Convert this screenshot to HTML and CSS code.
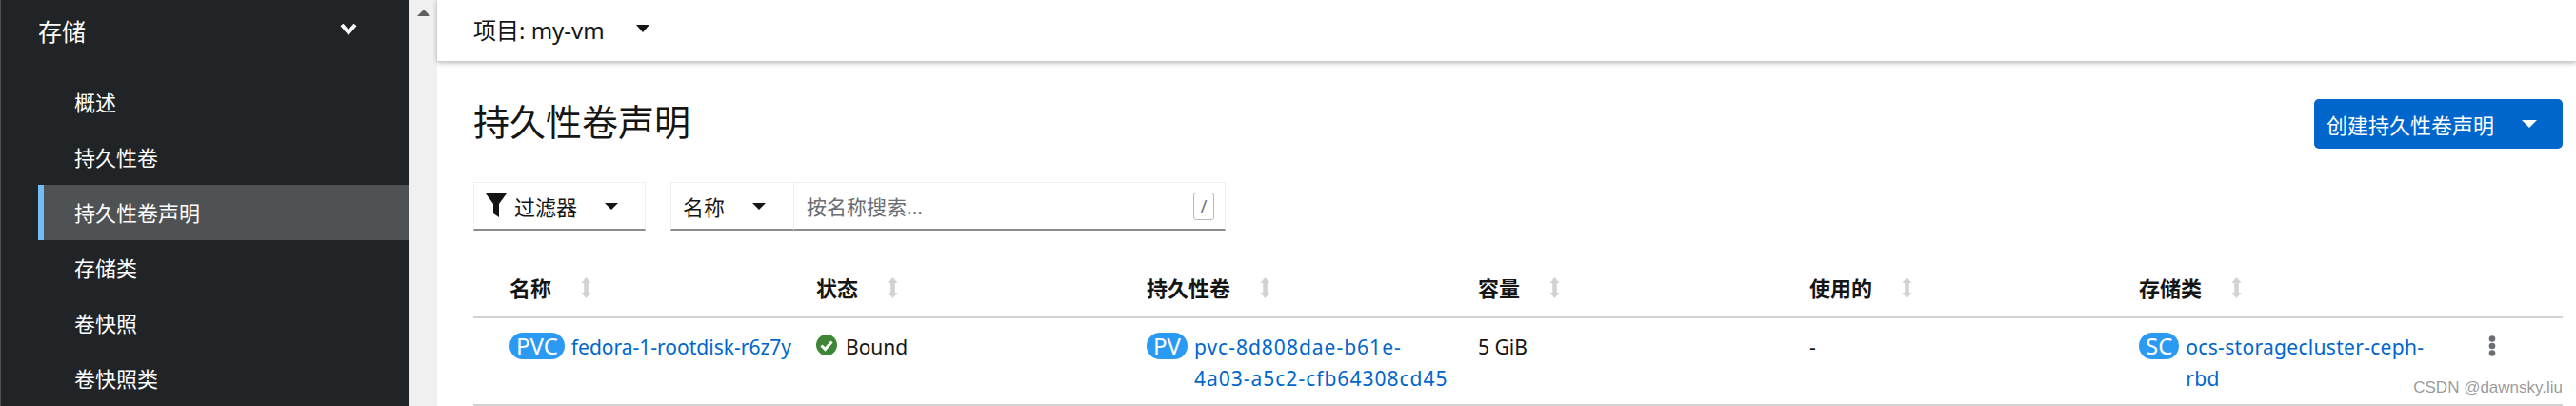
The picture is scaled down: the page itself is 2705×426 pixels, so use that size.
FILE: index.html
```html
<!DOCTYPE html>
<html lang="zh-CN">
<head>
    <meta charset="UTF-8">
    <title>持久性卷声明</title>
    <link rel="stylesheet" href="styles.css">
</head>
<body>
    <nav class="sidebar">
        <div class="nav-group">
            <span>存储</span>
            <svg class="nav-chevron" width="18" height="14" viewBox="0 0 18 14"><path d="M2 3l7 8 7-8" fill="none" stroke="#fff" stroke-width="4"/></svg>
        </div>
        <ul class="nav-list">
            <li class="nav-item">概述</li>
            <li class="nav-item">持久性卷</li>
            <li class="nav-item active">持久性卷声明</li>
            <li class="nav-item">存储类</li>
            <li class="nav-item">卷快照</li>
            <li class="nav-item">卷快照类</li>
        </ul>
    </nav>
    <div class="scrollbar"><span class="scroll-up"></span></div>
    <main class="main">
        <header class="topbar">
            <span>项目: my-vm</span>
            <span class="caret caret-top"></span>
        </header>
        <div class="title-row">
            <h1 class="title">持久性卷声明</h1>
            <button class="create-button">创建持久性卷声明<span class="caret caret-white"></span></button>
        </div>
        <div class="filters">
            <div class="filter-box filter-type">
                <svg class="funnel" width="22" height="25" viewBox="0 0 22 25"><path d="M0 0h22L14 11v14l-6-4V11z" fill="#151515"/></svg>
                <span>过滤器</span>
                <span class="caret caret-small"></span>
            </div>
            <div class="filter-group">
                <div class="filter-box filter-name">
                    <span>名称</span>
                    <span class="caret caret-small"></span>
                </div>
                <div class="filter-box search">
                    <span>按名称搜索...</span>
                    <kbd class="slash">/</kbd>
                </div>
            </div>
        </div>
        <div class="table">
            <div class="row head">
                <div class="cell cell-first">名称<svg class="sort" width="11" height="22" viewBox="0 0 12 24"><path d="M6 0l5.500 6.500H8.500v11h3L6 24 .5 17.500h3v-11h-3z"/></svg></div>
                <div class="cell">状态<svg class="sort" width="11" height="22" viewBox="0 0 12 24"><path d="M6 0l5.500 6.500H8.500v11h3L6 24 .5 17.500h3v-11h-3z"/></svg></div>
                <div class="cell">持久性卷<svg class="sort" width="11" height="22" viewBox="0 0 12 24"><path d="M6 0l5.500 6.500H8.500v11h3L6 24 .5 17.500h3v-11h-3z"/></svg></div>
                <div class="cell">容量<svg class="sort" width="11" height="22" viewBox="0 0 12 24"><path d="M6 0l5.500 6.500H8.500v11h3L6 24 .5 17.500h3v-11h-3z"/></svg></div>
                <div class="cell">使用的<svg class="sort" width="11" height="22" viewBox="0 0 12 24"><path d="M6 0l5.500 6.500H8.500v11h3L6 24 .5 17.500h3v-11h-3z"/></svg></div>
                <div class="cell">存储类<svg class="sort" width="11" height="22" viewBox="0 0 12 24"><path d="M6 0l5.500 6.500H8.500v11h3L6 24 .5 17.500h3v-11h-3z"/></svg></div>
                <div class="cell"></div>
            </div>
            <div class="row body">
                <div class="cell cell-first res"><span class="badge">PVC</span><a class="link">fedora-1-rootdisk-r6z7y</a></div>
                <div class="cell status">
                    <svg width="22" height="22" viewBox="0 0 22 22"><circle cx="11" cy="11" r="11" fill="#3e8635"/><path d="M5.500 11.500l4 4 7-8" fill="none" stroke="#fff" stroke-width="3"/></svg>
                    <span>Bound</span>
                </div>
                <div class="cell res"><span class="badge">PV</span><a class="link link-pv">pvc-8d808dae-b61e-<br>4a03-a5c2-cfb64308cd45</a></div>
                <div class="cell">5 GiB</div>
                <div class="cell">-</div>
                <div class="cell res"><span class="badge">SC</span><a class="link link-sc">ocs-storagecluster-ceph-<br>rbd</a></div>
                <div class="cell kebab">
                    <svg width="8" height="22" viewBox="0 0 8 22" fill="#6a6e73"><circle cx="4" cy="3.500" r="3.300"/><circle cx="4" cy="11" r="3.300"/><circle cx="4" cy="18.500" r="3.300"/></svg>
                </div>
            </div>
        </div>
    </main>
    <div class="watermark">CSDN @dawnsky.liu</div>
</body>
</html>
```

FILE: styles.css
```css
* {
    box-sizing: border-box;
}
html, body {
    height: 426px;
    overflow: hidden;
}
body {
    margin: 0;
    display: flex;
    font-family: "Noto Sans", "Noto Sans CJK SC", sans-serif;
    font-size: 22px;
    color: #151515;
    background-color: #fff;
}
.sidebar {
    width: 430px;
    flex-shrink: 0;
    background-color: #212427;
    border-left: 1px solid #4f5255;
    color: #fff;
    padding-left: 39px;
}
.nav-group {
    display: flex;
    align-items: center;
    justify-content: space-between;
    height: 64px;
    font-size: 25px;
    padding-right: 55px;
}
.nav-chevron {
    margin-top: -4px;
}
.nav-list {
    list-style: none;
    margin: 14px 0 0;
    padding: 0;
}
.nav-item {
    height: 58px;
    line-height: 58px;
    padding-left: 38px;
}
.nav-item.active {
    background-color: #4f5255;
    border-left: 6px solid #73bcf7;
    padding-left: 32px;
}
.scrollbar {
    width: 29px;
    flex-shrink: 0;
    background-color: #f0f0f0;
    display: flex;
    justify-content: center;
    padding-top: 10px;
}
.scroll-up {
    width: 0;
    height: 0;
    border-left: 7px solid transparent;
    border-right: 7px solid transparent;
    border-bottom: 7px solid #606060;
}
.main {
    flex: 1;
    min-width: 0;
}
.topbar {
    height: 65px;
    display: flex;
    align-items: center;
    gap: 33px;
    padding-left: 38px;
    font-size: 24px;
    padding-bottom: 4px;
    box-shadow: 0 1px 5px rgba(3, 3, 3, 0.3);
    border-bottom: 1px solid #d2d2d2;
}
.caret {
    display: inline-block;
    width: 0;
    height: 0;
    border-left: 8px solid transparent;
    border-right: 8px solid transparent;
    border-top: 8px solid #151515;
}
.caret-top {
    border-left-width: 7.5px;
    border-right-width: 7.5px;
}
.caret-white {
    border-top-color: #fff;
    margin-left: 29px;
    margin-right: 8px;
}
.caret-small {
    border-left-width: 7px;
    border-right-width: 7px;
    border-top-width: 7px;
}
.title-row {
    display: flex;
    justify-content: space-between;
    margin-top: 39px;
    padding: 0 14px 0 38px;
    height: 52px;
}
.title {
    margin: 0;
    font-size: 38px;
    font-weight: 400;
    line-height: 46px;
}
.create-button {
    display: flex;
    align-items: center;
    width: 261px;
    height: 52px;
    padding: 0 13px;
    background-color: #06c;
    color: #fff;
    border: none;
    border-radius: 5px;
    font-family: inherit;
    font-size: 22px;
}
.filters {
    display: flex;
    gap: 26px;
    margin-top: 35px;
    padding-left: 38px;
}
.filter-group {
    display: flex;
}
.filter-box {
    display: flex;
    align-items: center;
    height: 51px;
    border: 1px solid #f0f0f0;
    border-bottom: 2px solid #8a8d90;
}
.filter-type {
    width: 181px;
    padding-left: 12px;
    gap: 8px;
}
.filter-type .caret {
    margin-left: 21px;
}
.funnel {
    margin-top: -2px;
}
.filter-name {
    width: 130px;
    padding-left: 12px;
    gap: 29px;
}
.search {
    width: 454px;
    margin-left: -1px;
    padding: 0 11px 0 13px;
    justify-content: space-between;
    font-size: 21px;
    color: #6a6e73;
}
.slash {
    width: 22px;
    height: 29px;
    border: 1px solid #b8bbbe;
    border-radius: 3px;
    font-family: inherit;
    font-size: 18px;
    text-align: center;
    line-height: 26px;
}
.table {
    margin: 0 14px 0 38px;
}
.row {
    display: grid;
    grid-template-columns: 360px 347px 348px 348px 346px 354px 1fr;
}
.head {
    height: 92px;
    padding-top: 47px;
    border-bottom: 2px solid #d2d2d2;
    font-weight: 700;
    line-height: 26px;
}
.head .cell {
    display: flex;
    align-items: center;
    height: 26px;
}
.sort {
    margin-left: 31px;
    fill: #d2d2d2;
}
.body {
    height: 92px;
    padding-top: 14px;
    border-bottom: 2px solid #d2d2d2;
    font-size: 21px;
    line-height: 33px;
}
.cell-first {
    padding-left: 38px;
}
.res {
    display: flex;
    align-items: flex-start;
    gap: 7px;
}
.badge {
    flex-shrink: 0;
    height: 28px;
    line-height: 28px;
    margin-top: 1px;
    padding: 0 7px;
    background-color: #2b9af3;
    border-radius: 14px;
    font-size: 24px;
    color: #fff;
}
.link {
    color: #06c;
}
.link-pv {
    letter-spacing: 1px;
}
.link-sc {
    letter-spacing: 0.3px;
}
.status {
    display: flex;
    align-items: flex-start;
    gap: 9px;
}
.status svg {
    margin-top: 3px;
}
.kebab svg {
    display: block;
    margin-left: 13px;
    margin-top: 4px;
}
.watermark {
    position: absolute;
    right: 14px;
    bottom: 9px;
    font-family: "Liberation Sans", sans-serif;
    font-size: 17px;
    color: rgba(120, 120, 120, 0.75);
}
```
